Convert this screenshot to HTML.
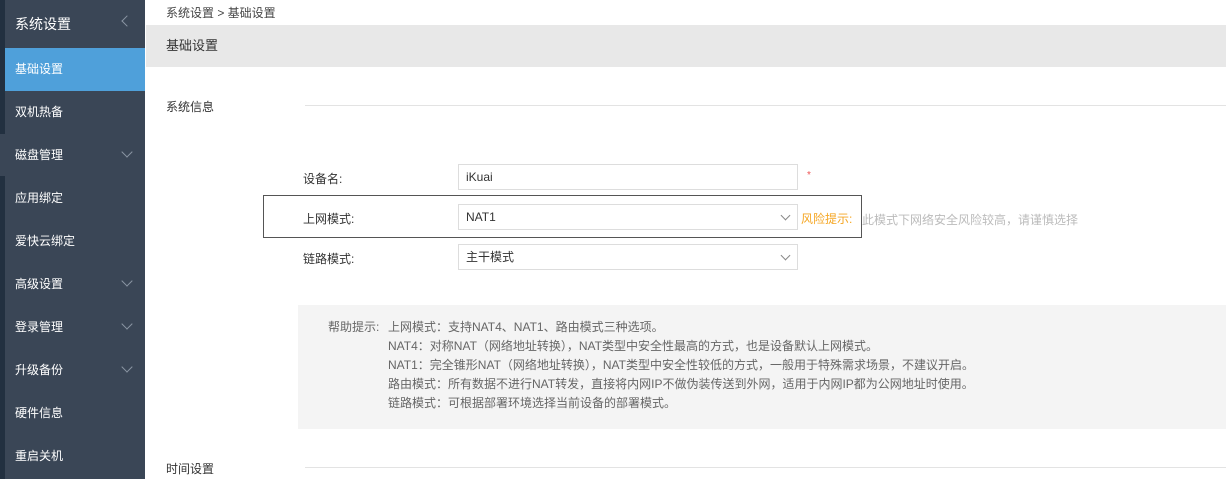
<!DOCTYPE html>
<html><head><meta charset="utf-8"><style>
*{margin:0;padding:0;box-sizing:border-box}
body{width:1226px;height:479px;overflow:hidden;background:#fff;font-family:"Liberation Sans","Noto Sans CJK SC",sans-serif;font-size:12px;color:#333;position:relative}
.side{position:absolute;left:0;top:0;width:145px;height:479px;background:#3a4656}
.strip{position:absolute;left:0;width:5px;background:#223040}
.side .it{position:absolute;left:0;width:145px;height:43px;line-height:43px;padding-left:15px;color:#fff;font-size:12px}
.side .act{background:#4fa0da;left:5px;width:140px;padding-left:10px}
.chev{position:absolute;right:14px;top:14px;width:8px;height:8px;border-right:1px solid #8a95a3;border-bottom:1px solid #8a95a3;transform:rotate(45deg)}
.abs{position:absolute}
.inp{position:absolute;left:458px;width:340px;height:26px;border:1px solid #ddd;padding-left:7px;line-height:24px;font-size:12px;color:#333}
.ic{position:absolute;right:8px;top:7px;width:7px;height:7px;border-right:1px solid #888;border-bottom:1px solid #888;transform:rotate(45deg)}
.lbl{position:absolute;left:303px;font-size:12px;color:#333}
.help{position:absolute;left:298px;top:305px;width:928px;height:124px;background:#f4f4f4;color:#666;font-size:12px;line-height:19px}
</style></head><body>
<div class="side">
<div class="strip" style="top:0;height:48px"></div>
<div class="strip" style="top:48px;height:86px"></div>
<div class="strip" style="top:176px;height:303px"></div>
<div class="it" style="top:2px;font-size:14px;height:44px;line-height:44px;background:#3a4656;left:5px;width:140px;padding-left:10px">系统设置<span style="position:absolute;right:14px;top:15px;width:8px;height:8px;border-left:1px solid #8a95a3;border-bottom:1px solid #8a95a3;transform:rotate(45deg)"></span></div>
<div class="it act" style="top:48px">基础设置</div>
<div class="it" style="top:91px;left:5px;width:140px;padding-left:10px;background:#3a4656">双机热备</div>
<div class="it" style="top:134px">磁盘管理<span class="chev"></span></div>
<div class="it" style="top:177px;left:5px;width:140px;padding-left:10px;background:#3a4656">应用绑定</div>
<div class="it" style="top:220px;left:5px;width:140px;padding-left:10px;background:#3a4656">爱快云绑定</div>
<div class="it" style="top:263px;left:5px;width:140px;padding-left:10px;background:#3a4656">高级设置<span class="chev"></span></div>
<div class="it" style="top:306px;left:5px;width:140px;padding-left:10px;background:#3a4656">登录管理<span class="chev"></span></div>
<div class="it" style="top:349px;left:5px;width:140px;padding-left:10px;background:#3a4656">升级备份<span class="chev"></span></div>
<div class="it" style="top:392px;left:5px;width:140px;padding-left:10px;background:#3a4656">硬件信息</div>
<div class="it" style="top:435px;left:5px;width:140px;padding-left:10px;background:#3a4656">重启关机</div>
</div>
<div class="abs" style="left:166px;top:4px;font-size:12px;color:#444">系统设置 &gt; 基础设置</div>
<div class="abs" style="left:146px;top:25px;width:1080px;height:42px;background:#e8e8e8;padding-left:20px;line-height:42px;font-size:13px;color:#333">基础设置</div>
<div class="abs" style="left:166px;top:98px;color:#333">系统信息</div>
<div class="abs" style="left:305px;top:105px;width:921px;height:1px;background:#e3e3e3"></div>
<div class="lbl" style="top:170px">设备名:</div>
<div class="inp" style="top:164px">iKuai</div>
<div class="abs" style="left:807px;top:170px;color:#e55;font-size:10px">*</div>
<div class="abs" style="left:263px;top:195px;width:599px;height:43px;border:1px solid #555"></div>
<div class="lbl" style="top:210px">上网模式:</div>
<div class="inp" style="top:204px">NAT1<span class="ic"></span></div>
<div class="abs" style="left:801px;top:210px;color:#f5a623;font-size:12px">风险提示:</div>
<div class="abs" style="left:862px;top:211px;color:#bbb;font-size:12px">此模式下网络安全风险较高，请谨慎选择</div>
<div class="lbl" style="top:250px">链路模式:</div>
<div class="inp" style="top:244px">主干模式<span class="ic"></span></div>
<div class="help">
<div class="abs" style="left:30px;top:13px">帮助提示:</div>
<div class="abs" style="left:90px;top:13px">上网模式：支持NAT4、NAT1、路由模式三种选项。<br>NAT4：对称NAT（网络地址转换），NAT类型中安全性最高的方式，也是设备默认上网模式。<br>NAT1：完全锥形NAT（网络地址转换），NAT类型中安全性较低的方式，一般用于特殊需求场景，不建议开启。<br>路由模式：所有数据不进行NAT转发，直接将内网IP不做伪装传送到外网，适用于内网IP都为公网地址时使用。<br>链路模式：可根据部署环境选择当前设备的部署模式。</div>
</div>
<div class="abs" style="left:166px;top:460px;color:#333">时间设置</div>
<div class="abs" style="left:305px;top:467px;width:921px;height:1px;background:#e3e3e3"></div>
</body></html>
